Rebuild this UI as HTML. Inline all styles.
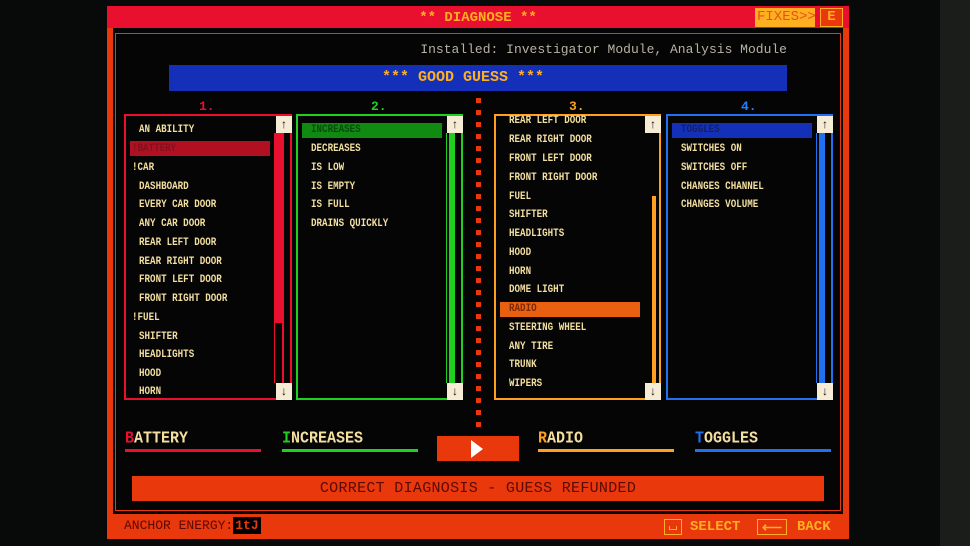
<!DOCTYPE html><html><head><style>
*{margin:0;padding:0;box-sizing:border-box}
body{width:970px;height:546px;background:#080a0a;position:relative;overflow:hidden;font-family:"Liberation Mono",monospace}
.a{position:absolute}
.it{position:absolute;left:13px;font:bold 10px "Liberation Mono",monospace;color:#f3dfa0;white-space:nowrap;transform:scale(0.92,1.12);transform-origin:left center}
.sb{position:absolute;width:16px;background:#f6ecd6;color:#111;font:bold 12px "Liberation Sans";text-align:center;line-height:16px;height:17px}
.lbl{position:absolute;font:bold 15px "Liberation Mono",monospace;color:#f3dfa0;transform:scaleY(1.1)}
.num{position:absolute;font:bold 13px "Liberation Mono",monospace}
</style></head><body>
<div class="a" style="left:940px;top:0;width:30px;height:546px;background:#1a1d1a"></div>
<div class="a" style="left:107px;top:6px;width:742px;height:533px;background:#e8380c"></div>
<div class="a" style="left:107px;top:6px;width:742px;height:22px;background:#e8102e"></div>
<div class="a" style="left:0;top:10px;width:970px;text-align:center;font:bold 14px 'Liberation Mono';color:#ffb020;padding-right:14px">** DIAGNOSE **</div>
<div class="a" style="left:755px;top:8px;width:60px;height:19px;background:#ffb020;color:#e8501a;font:14px 'Liberation Mono';line-height:19px;padding-left:2px">FIXES&gt;&gt;</div>
<div class="a" style="left:820px;top:8px;width:23px;height:19px;border:1px solid #ffb020;background:#e8380c;color:#ffb020;font:bold 14px 'Liberation Mono';text-align:center;line-height:17px">E</div>
<div class="a" style="left:113px;top:28px;width:730px;height:486px;background:#050505"></div>
<div class="a" style="left:115px;top:33px;width:726px;height:478px;border:1px solid #e8380c"></div>
<div class="a" style="left:300px;top:42px;width:487px;text-align:right;font:13px 'Liberation Mono';color:#b8b2a2">Installed: Investigator Module, Analysis Module</div>
<div class="a" style="left:169px;top:65px;width:618px;height:26px;background:#1530b8;text-align:center;font:bold 15px 'Liberation Mono';color:#ffb020;line-height:26px;padding-right:30px">*** GOOD GUESS ***</div>
<div class="num" style="left:199px;top:99px;color:#e8102e">1.</div>
<div class="num" style="left:371px;top:99px;color:#20d020">2.</div>
<div class="num" style="left:569px;top:99px;color:#ffa020">3.</div>
<div class="num" style="left:741px;top:99px;color:#2080ff">4.</div>
<div class="a" style="left:476px;top:98px;width:5px;height:330px;background:repeating-linear-gradient(#e8380c 0 5px,transparent 5px 12px)"></div>
<!-- panel 1 -->
<div class="a" style="left:124px;top:114px;width:168px;height:286px;border:2px solid #e8102e">
<div class="a" style="left:4px;top:25px;width:140px;height:15px;background:#b01020"></div>
<div class="a" style="left:156px;top:17px;width:2px;height:250px;background:#e8102e"></div><div class="a" style="left:148px;top:17px;width:1px;height:250px;background:#e8102e"></div>
<div class="a" style="left:149px;top:17px;width:7px;height:190px;background:#e8102e"></div>
<div class="sb" style="left:150px;top:0">↑</div><div class="sb" style="left:150px;top:267px">↓</div>
<div class="it" style="top:9px">AN ABILITY</div>
<div class="it" style="top:28px;left:6px;color:#801020">!BATTERY</div>
<div class="it" style="top:47px;left:6px">!CAR</div>
<div class="it" style="top:66px">DASHBOARD</div>
<div class="it" style="top:84px">EVERY CAR DOOR</div>
<div class="it" style="top:103px">ANY CAR DOOR</div>
<div class="it" style="top:122px">REAR LEFT DOOR</div>
<div class="it" style="top:141px">REAR RIGHT DOOR</div>
<div class="it" style="top:159px">FRONT LEFT DOOR</div>
<div class="it" style="top:178px">FRONT RIGHT DOOR</div>
<div class="it" style="top:197px;left:6px">!FUEL</div>
<div class="it" style="top:216px">SHIFTER</div>
<div class="it" style="top:234px">HEADLIGHTS</div>
<div class="it" style="top:253px">HOOD</div>
<div class="it" style="top:271px">HORN</div>
</div>
<!-- panel 2 -->
<div class="a" style="left:296px;top:114px;width:167px;height:286px;border:2px solid #20d020">
<div class="a" style="left:4px;top:7px;width:140px;height:15px;background:#108a10"></div>
<div class="a" style="left:148px;top:17px;width:9px;height:250px;border-left:1px solid #20d020;border-right:2px solid #20d020"></div>
<div class="a" style="left:151px;top:17px;width:5px;height:250px;background:#20d020"></div>
<div class="sb" style="left:149px;top:0">↑</div><div class="sb" style="left:149px;top:267px">↓</div>
<div class="it" style="top:9px;color:#0a4a10">INCREASES</div>
<div class="it" style="top:28px">DECREASES</div>
<div class="it" style="top:47px">IS LOW</div>
<div class="it" style="top:66px">IS EMPTY</div>
<div class="it" style="top:84px">IS FULL</div>
<div class="it" style="top:103px">DRAINS QUICKLY</div>
</div>
<!-- panel 3 -->
<div class="a" style="left:494px;top:114px;width:167px;height:286px;border:2px solid #ffa020">
<div class="a" style="left:4px;top:186px;width:140px;height:15px;background:#e86010"></div>
<div class="a" style="left:156px;top:80px;width:4px;height:187px;background:#ffa020"></div>
<div class="sb" style="left:149px;top:0">↑</div><div class="sb" style="left:149px;top:267px">↓</div>
<div class="it" style="top:0px">REAR LEFT DOOR</div>
<div class="it" style="top:19px">REAR RIGHT DOOR</div>
<div class="it" style="top:38px">FRONT LEFT DOOR</div>
<div class="it" style="top:57px">FRONT RIGHT DOOR</div>
<div class="it" style="top:76px">FUEL</div>
<div class="it" style="top:94px">SHIFTER</div>
<div class="it" style="top:113px">HEADLIGHTS</div>
<div class="it" style="top:132px">HOOD</div>
<div class="it" style="top:151px">HORN</div>
<div class="it" style="top:169px">DOME LIGHT</div>
<div class="it" style="top:188px;color:#7a2a08">RADIO</div>
<div class="it" style="top:207px">STEERING WHEEL</div>
<div class="it" style="top:226px">ANY TIRE</div>
<div class="it" style="top:244px">TRUNK</div>
<div class="it" style="top:263px">WIPERS</div>
</div>
<!-- panel 4 -->
<div class="a" style="left:666px;top:114px;width:167px;height:286px;border:2px solid #2070f0">
<div class="a" style="left:4px;top:7px;width:140px;height:15px;background:#1530b8"></div>
<div class="a" style="left:148px;top:17px;width:9px;height:250px;border-left:1px solid #2070f0;border-right:2px solid #2070f0"></div>
<div class="a" style="left:151px;top:17px;width:5px;height:250px;background:#2070f0"></div>
<div class="sb" style="left:149px;top:0">↑</div><div class="sb" style="left:149px;top:267px">↓</div>
<div class="it" style="top:9px;color:#10206a">TOGGLES</div>
<div class="it" style="top:28px">SWITCHES ON</div>
<div class="it" style="top:47px">SWITCHES OFF</div>
<div class="it" style="top:66px">CHANGES CHANNEL</div>
<div class="it" style="top:84px">CHANGES VOLUME</div>
</div>
<!-- bottom labels -->
<div class="lbl" style="left:125px;top:430px"><span style="color:#e8102e">B</span>ATTERY</div>
<div class="a" style="left:125px;top:449px;width:136px;height:3px;background:#e8102e"></div>
<div class="lbl" style="left:282px;top:430px"><span style="color:#20d020">I</span>NCREASES</div>
<div class="a" style="left:282px;top:449px;width:136px;height:3px;background:#20d020"></div>
<div class="a" style="left:437px;top:436px;width:82px;height:25px;background:#e8380c"></div>
<svg class="a" style="left:470px;top:439px" width="14" height="20"><path d="M1 1L13 10L1 19Z" fill="#fff"/></svg>
<div class="lbl" style="left:538px;top:430px"><span style="color:#ffa020">R</span>ADIO</div>
<div class="a" style="left:538px;top:449px;width:136px;height:3px;background:#ffa020"></div>
<div class="lbl" style="left:695px;top:430px"><span style="color:#2070f0">T</span>OGGLES</div>
<div class="a" style="left:695px;top:449px;width:136px;height:3px;background:#2070f0"></div>
<div class="a" style="left:132px;top:476px;width:692px;height:25px;background:#e8380c;text-align:center;font:15px 'Liberation Mono';color:#5a0a04;line-height:25px;letter-spacing:0.3px">CORRECT DIAGNOSIS - GUESS REFUNDED</div>
<div class="a" style="left:124px;top:518px;font:13px 'Liberation Mono';color:#5a0a04">ANCHOR ENERGY:<span style="background:#000;color:#e8380c;font-weight:bold;padding:1px 2px">1tJ</span></div>
<div class="a" style="left:664px;top:519px;width:18px;height:16px;border:1px solid #ffb020"></div>
<div class="a" style="left:669px;top:526px;width:8px;height:4px;border:1px solid #ffb020;border-top:none"></div>
<div class="a" style="left:690px;top:519px;font:bold 14px 'Liberation Mono';color:#ffb020">SELECT</div>
<div class="a" style="left:757px;top:519px;width:30px;height:16px;border:1px solid #ffb020;color:#ffb020;font:bold 14px 'Liberation Sans';text-align:center;line-height:14px">⟵</div>
<div class="a" style="left:797px;top:519px;font:bold 14px 'Liberation Mono';color:#ffb020">BACK</div>
</body></html>
